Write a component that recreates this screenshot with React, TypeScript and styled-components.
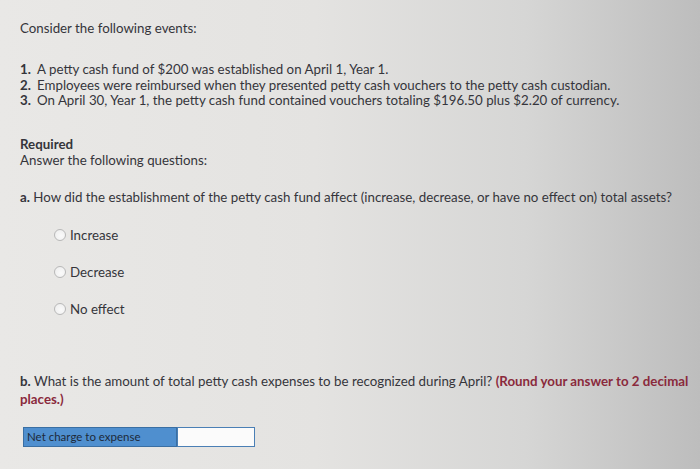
import React from "react";
import styled, { createGlobalStyle } from "styled-components";

const Global = createGlobalStyle`
  html, body { margin: 0; padding: 0; }
  body {
    width: 700px;
    height: 469px;
    overflow: hidden;
    font-family: Lato, "Open Sans", sans-serif;
    color: #35353b;
  }
`;

const Page = styled.div`
  width: 700px;
  height: 469px;
  box-sizing: border-box;
  padding: 20px 0 0 20px;
  background: linear-gradient(90deg, #e9e8e6 0%, #e4e3e1 45%, #d6d6d5 75%, #bdbdbd 100%);
  font-size: 13.3px;
  line-height: 16px;
`;

const Intro = styled.p`
  margin: 0 0 26px 0;
`;

const List = styled.ol`
  margin: 0 0 27px 0;
  padding: 0;
  list-style: none;
`;

const Item = styled.li`
  display: flex;
  gap: 4px;
  line-height: 15.5px;
`;

const Num = styled.b`
  width: 13px;
  font-weight: 700;
`;

const Heading = styled.div`
  font-weight: 700;
`;

const Question = styled.p<{ $mt: number }>`
  margin: ${(p) => p.$mt}px 0 0 0;
  line-height: 18px;
`;

const Red = styled.b`
  color: #8a2a3c;
`;

const Options = styled.div`
  display: flex;
  flex-direction: column;
  gap: 21px;
  margin: 21px 0 0 34px;
`;

const Option = styled.label`
  display: flex;
  align-items: center;
  gap: 4px;
`;

const Radio = styled.span`
  width: 12px;
  height: 12px;
  border-radius: 50%;
  border: 1px solid #b8b8b8;
  background: radial-gradient(circle at 60% 60%, #fafafa 0%, #ececec 100%);
  box-sizing: border-box;
`;

const AnswerRow = styled.div`
  display: flex;
  margin: 19px 0 0 3px;
  height: 20px;
`;

const AnswerLabel = styled.div`
  width: 154px;
  background: #4f8fcf;
  border: 1px solid #3a6fa3;
  box-sizing: border-box;
  font-size: 11.5px;
  line-height: 18px;
  padding-left: 3px;
  color: #1d2a3a;
`;

const AnswerInput = styled.div`
  width: 78px;
  background: #fbfbfb;
  border: 1px solid #4a7fb5;
  box-sizing: border-box;
`;

export default function App() {
  return (
    <Page>
      <Global />
      <Intro>Consider the following events:</Intro>
      <List>
        <Item><Num>1.</Num>A petty cash fund of $200 was established on April 1, Year 1.</Item>
        <Item><Num>2.</Num>Employees were reimbursed when they presented petty cash vouchers to the petty cash custodian.</Item>
        <Item><Num>3.</Num>On April 30, Year 1, the petty cash fund contained vouchers totaling $196.50 plus $2.20 of currency.</Item>
      </List>
      <Heading>Required</Heading>
      <div>Answer the following questions:</div>
      <Question $mt={20}><b>a.</b> How did the establishment of the petty cash fund affect (increase, decrease, or have no effect on) total assets?</Question>
      <Options>
        <Option><Radio />Increase</Option>
        <Option><Radio />Decrease</Option>
        <Option><Radio />No effect</Option>
      </Options>
      <Question $mt={55}><b>b.</b> What is the amount of total petty cash expenses to be recognized during April? <Red>(Round your answer to 2 decimal places.)</Red></Question>
      <AnswerRow>
        <AnswerLabel>Net charge to expense</AnswerLabel>
        <AnswerInput />
      </AnswerRow>
    </Page>
  );
}
